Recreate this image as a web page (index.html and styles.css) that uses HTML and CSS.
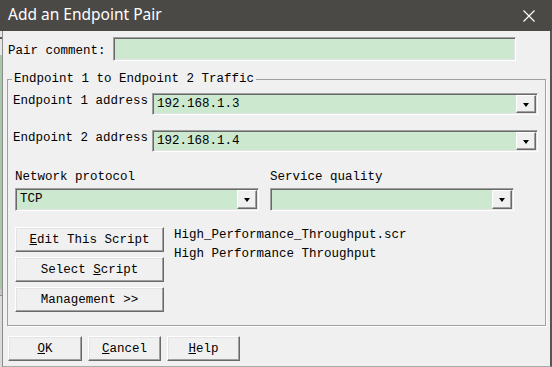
FILE: index.html
```html
<!DOCTYPE html>
<html>
<head>
<meta charset="utf-8">
<title>Add an Endpoint Pair</title>
<link rel="stylesheet" href="styles.css">
</head>
<body>
<div class="titlebar">
<span class="title">Add an Endpoint Pair</span>
<svg class="close" width="12" height="12" viewBox="0 0 12 12"><path d="M0.5 0.5 L11.5 11.5 M11.5 0.5 L0.5 11.5" stroke="#fff" stroke-width="1.2" fill="none"/></svg>
</div>
<div class="frame">
<div class="backdrop"></div>
<div class="dialog">

<div class="comment-row">
<label class="lbl lbl-comment">Pair comment:</label>
<div class="edit comment"></div>
</div>

<fieldset class="group">
<legend>Endpoint 1 to Endpoint 2 Traffic</legend>

<div class="addr-row first">
<label class="lbl lbl-addr">Endpoint 1 address</label>
<div class="combo wide"><span class="value">192.168.1.3</span><span class="drop"><i class="arrow"></i></span></div>
</div>

<div class="addr-row">
<label class="lbl lbl-addr">Endpoint 2 address</label>
<div class="combo wide"><span class="value">192.168.1.4</span><span class="drop"><i class="arrow"></i></span></div>
</div>

<div class="pair-labels">
<span class="lbl-proto">Network protocol</span>
<span>Service quality</span>
</div>
<div class="pair-combos">
<div class="combo half"><span class="value">TCP</span><span class="drop"><i class="arrow"></i></span></div>
<div class="combo half"><span class="value"></span><span class="drop"><i class="arrow"></i></span></div>
</div>

<div class="script-area">
<div class="btn-col">
<button class="btn script-btn"><u>E</u>dit This Script</button>
<button class="btn script-btn">Select <u>S</u>cript</button>
<button class="btn script-btn">Management &gt;&gt;</button>
</div>
<div class="script-info">
<div>High_Performance_Throughput.scr</div>
<div>High Performance Throughput</div>
</div>
</div>
</fieldset>

<div class="actions">
<button class="btn act ok"><u>O</u>K</button>
<button class="btn act"><u>C</u>ancel</button>
<button class="btn act"><u>H</u>elp</button>
</div>

</div>
</div>
</body>
</html>
```
FILE: styles.css
```css
/* Dialog: Add an Endpoint Pair */

body
{ margin: 0;
  width: 552px;
  height: 367px;
  overflow: hidden;
  background-color: #f0f0f0;
  font-family: "Liberation Mono", monospace;
  font-size: 12.5px;
  color: #000;
}

/* Title bar */

div.titlebar
{ height: 31px;
  background-color: #4b4946;
  color: #fff;
  display: flex;
  align-items: center;
  justify-content: space-between;
  padding: 0 17px 0 8px;
  font-family: "Noto Sans", sans-serif;
  font-size: 15.5px;
}

span.title
{ padding-bottom: 3px;
}

/* Frame */

div.frame
{ display: flex;
  height: 336px;
}

div.backdrop
{ width: 2px;
  border-right: 1px solid #8c8c8c;
  background: linear-gradient(to bottom, #e6e6e6 0 6px, #5a5a5a 6px 8px, #e6e6e6 8px 24px,
              #a9c8a9 24px 258px, #c4c4c4 258px 264px, #8c8c8c 264px 265px, #dadada 265px);
}

div.dialog
{ flex: 1;
  box-sizing: border-box;
  border-right: 2px solid #555;
  border-bottom: 1px solid #aaa;
}

/* Pair comment */

div.comment-row
{ display: flex;
  align-items: center;
  height: 24px;
  margin: 6px 0 0 5px;
}

label.lbl-comment
{ width: 105px;
  padding-top: 3px;
}

div.edit, div.combo
{ box-sizing: border-box;
  background-color: #cce8cf;
  border: 1px solid;
  border-color: #a0a0a0 #fff #fff #a0a0a0;
  box-shadow: inset 1px 1px #696969, inset -1px -1px #e3e3e3;
}

div.edit.comment
{ width: 403px;
  height: 24px;
}

/* Group box */

fieldset.group
{ box-sizing: border-box;
  width: 539px;
  min-width: 0;
  margin: 11px 0 0 4px;
  padding: 0 0 13px 0;
  border: 1px solid #a0a0a0;
  box-shadow: 1px 1px #fff;
}

fieldset.group legend
{ margin-left: 4px;
  padding: 0 2px;
  line-height: 14px;
}

div.addr-row
{ display: flex;
  height: 22px;
  margin: 15px 0 0 5px;
}

div.addr-row.first
{ margin-top: 7px;
}

label.lbl-addr
{ width: 139px;
  line-height: 14px;
  padding-top: 1px;
}

div.combo
{ display: flex;
  padding: 1px 1px 1px 1px;
}

div.combo.wide
{ width: 386px;
  height: 22px;
}

div.combo.half
{ width: 244px;
  height: 23px;
}

span.value
{ flex: 1;
  padding-left: 3px;
  line-height: 19px;
}

span.drop
{ width: 18px;
  display: flex;
  align-items: center;
  justify-content: center;
  background-color: #f0f0f0;
  border: 1px solid;
  border-color: #fff #696969 #696969 #fff;
  box-shadow: inset -1px -1px #a0a0a0;
}

i.arrow
{ width: 0;
  height: 0;
  border-left: 3px solid transparent;
  border-right: 3px solid transparent;
  border-top: 4px solid #000;
  margin-top: 1px;
}

div.pair-labels
{ display: flex;
  margin: 18px 0 0 7px;
  line-height: 14px;
}

span.lbl-proto
{ width: 255px;
}

div.pair-combos
{ display: flex;
  gap: 11px;
  margin: 4px 0 0 7px;
}

/* Script buttons */

div.script-area
{ display: flex;
  margin: 16px 0 0 7px;
}

div.btn-col
{ display: flex;
  flex-direction: column;
  gap: 5px;
}

button.btn
{ font: inherit;
  color: #000;
  padding: 0;
  height: 25px;
  background-color: #f0f0f0;
  border: 1px solid;
  border-color: #fff #696969 #696969 #fff;
  box-shadow: inset -1px -1px #a0a0a0, inset 1px 1px #e3e3e3;
}

button.script-btn
{ width: 149px;
}

div.script-info
{ margin: -1px 0 0 10px;
  line-height: 19px;
}

/* Bottom buttons */

div.actions
{ display: flex;
  gap: 6px;
  margin: 10px 0 0 5px;
}

button.act
{ width: 73px;
}

button.act.ok
{ width: 74px;
}
```
